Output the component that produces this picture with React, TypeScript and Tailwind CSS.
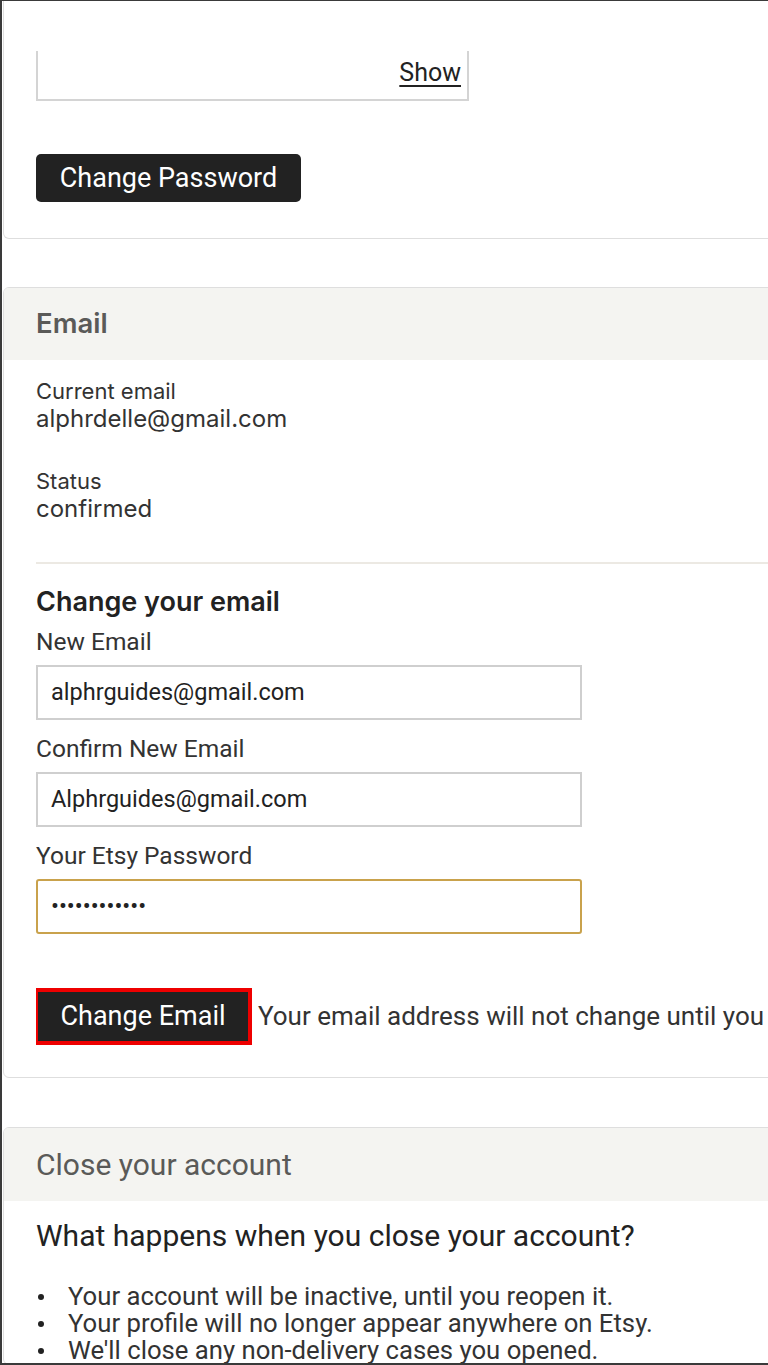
import React from "react";

const roboto = "font-['Roboto',_'Liberation_Sans',_sans-serif]";
const graphik = "font-['Inter',_'Liberation_Sans',_sans-serif]";

function Field({ label, value, focused }: { label: string; value: string; focused?: boolean }) {
  return (
    <div>
      <div className={`${roboto} text-[24.5px] leading-[26px] text-[#333] mt-[16px]`}>{label}</div>
      <div
        className={`mt-[10px] w-[546px] h-[55px] flex items-center px-[13px] ${roboto} text-[23.5px] text-[#222] ${
          focused ? "border-2 border-[#c9a24c] rounded-[3px]" : "border-2 border-[#cfcfcf]"
        }`}
      >
        {value}
      </div>
    </div>
  );
}

const bullets = [
  "Your account will be inactive, until you reopen it.",
  "Your profile will no longer appear anywhere on Etsy.",
  "We'll close any non-delivery cases you opened.",
];

export default function App() {
  return (
    <div className="w-[768px] h-[1365px] overflow-hidden bg-white border-t border-l-2 border-b-2 border-[#3a3a3a]">
      {/* Password card (bottom part) */}
      <div className="ml-[1px] -mr-4 border border-t-0 border-[#dedede] rounded-b-md px-[32px] pb-[36px]">
        <div className="pt-[50px]">
          <div className="w-[433px] h-[50px] border-l-2 border-r-2 border-b-2 border-[#d4d4d4] flex items-end justify-end pr-[6px] pb-[14px]">
            <span className={`${roboto} text-[25px] leading-none underline underline-offset-[4px] text-[#222]`}>Show</span>
          </div>
        </div>
        <button
          className={`mt-[53px] w-[265px] h-[48px] bg-[#222] rounded-[5px] text-white ${roboto} text-[27px]`}
        >
          Change Password
        </button>
      </div>

      {/* Email card */}
      <div className="mt-[48px] ml-[1px] -mr-4 border border-[#dedede] rounded-md overflow-hidden">
        <div className="bg-[#f4f4f1] h-[72px] flex items-center px-[32px]">
          <span className={`${graphik} text-[27.5px] font-semibold text-[#5a5a58]`}>Email</span>
        </div>
        <div className="pl-[32px] pb-[32px]">
          <div className={`${graphik} text-[#333] pt-[18px]`}>
            <div className="text-[22px] leading-[26px]">Current email</div>
            <div className="text-[24px] leading-[30px]">alphrdelle@gmail.com</div>
            <div className="text-[22px] leading-[26px] mt-[34px]">Status</div>
            <div className="text-[24px] leading-[30px]">confirmed</div>
          </div>
          <div className="mt-[38px] border-t-2 border-[#ece9e3]" />
          <div className={`${graphik} text-[27px] font-semibold text-[#222] mt-[21px] leading-[34px]`}>Change your email</div>
          <div className="-mt-[6px]">
            <Field label="New Email" value="alphrguides@gmail.com" />
            <Field label="Confirm New Email" value="Alphrguides@gmail.com" />
            <Field label="Your Etsy Password" value="••••••••••••" focused />
          </div>
          <div className="mt-[54px] flex items-center whitespace-nowrap overflow-hidden">
            <div className="shrink-0 border-[4px] border-[#ee0000] -ml-[2px]">
              <button className={`w-[210px] h-[49px] bg-[#222] text-white ${roboto} text-[27px]`}>Change Email</button>
            </div>
            <span className={`${roboto} text-[26px] text-[#333] ml-[6px]`}>
              Your email address will not change until you confirm it.
            </span>
          </div>
        </div>
      </div>

      {/* Close account card */}
      <div className="mt-[49px] ml-[1px] -mr-4 border border-[#dedede] rounded-md overflow-hidden">
        <div className="bg-[#f4f4f1] h-[73px] flex items-center px-[32px]">
          <span className={`${roboto} text-[30px] text-[#5a5a58]`}>Close your account</span>
        </div>
        <div className="px-[32px]">
          <div className={`${roboto} text-[30px] text-[#222] mt-[18px] leading-[34px]`}>
            What happens when you close your account?
          </div>
          <ul className={`${roboto} text-[25.7px] leading-[27px] text-[#333] mt-[30px]`}>
            {bullets.map((b) => (
              <li key={b} className="flex items-center">
                <span className="w-[32px] shrink-0 pl-[2px]">
                  <span className="block w-[6px] h-[6px] rounded-full bg-[#222]" />
                </span>
                <span>{b}</span>
              </li>
            ))}
          </ul>
        </div>
      </div>
    </div>
  );
}
